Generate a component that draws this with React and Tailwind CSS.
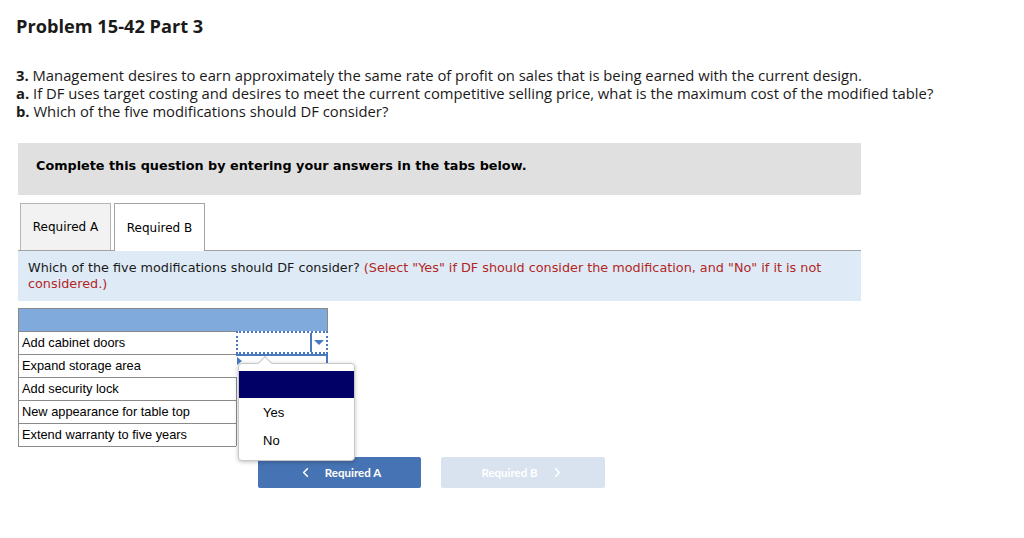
import { ChevronLeft, ChevronRight } from 'lucide-react';

const ROWS = [
    'Add cabinet doors',
    'Expand storage area',
    'Add security lock',
    'New appearance for table top',
    'Extend warranty to five years',
];

export default function App() {
    return (
        <div className="relative w-[1024px] h-[538px] bg-white text-[#1a1a1a] font-['Open_Sans',sans-serif]">
            <div className="pl-4 pt-4">
                <h1 className="text-[18.2px] leading-[20px] font-bold">Problem 15-42 Part 3</h1>

                {/* question text */}
                <div className="mt-[30px] text-[14.8px] leading-[18px]">
                    <p><b>3.</b> Management desires to earn approximately the same rate of profit on sales that is being earned with the current design.</p>
                    <p><b>a.</b> If DF uses target costing and desires to meet the current competitive selling price, what is the maximum cost of the modified table?</p>
                    <p><b>b.</b> Which of the five modifications should DF consider?</p>
                </div>

                <div className="ml-[2px] w-[843px] font-['DejaVu_Sans',Verdana,sans-serif]">
                    <div className="mt-[23px] h-[52px] bg-[#e0e0e0] pl-[18px] pt-[13px] text-[12.8px] font-bold text-black">
                        Complete this question by entering your answers in the tabs below.
                    </div>

                    {/* tabs */}
                    <div className="mt-[8px] flex items-end gap-[3px] pl-[2px] border-b border-[#a3a3a3] text-[12px] text-black">
                        <div className="w-[91px] h-[47px] flex items-center justify-center bg-[#f2f2f2] border border-b-0 border-[#b5b5b5]">Required A</div>
                        <div className="w-[91px] h-[48px] -mb-px flex items-center justify-center bg-white border border-b-0 border-[#a3a3a3]">Required B</div>
                    </div>

                    <div className="h-[50px] bg-[#deebf7] pl-[10px] pr-[10px] pt-[9px] text-[12.8px] leading-[16px] text-[#1a1a1a]">
                        Which of the five modifications should DF consider? <span className="text-[#b3261e]">(Select "Yes" if DF should consider the modification, and "No" if it is not considered.)</span>
                    </div>
                </div>

                {/* answer table */}
                <div className="ml-[2px] mt-[7px] w-[310px] font-['Liberation_Sans',Arial,sans-serif] text-[12.8px] text-black">
                    <div className="h-[23px] bg-[#80a9dc] border border-b-0 border-[#8a8a8a]"></div>
                    {ROWS.map((label, i) => (
                        <div key={label} className="flex h-[23px]">
                            <div className="w-[218px] flex items-center pl-[3px] border-l border-t border-[#8a8a8a]">
                                {label}
                            </div>
                            {i === 0 ? (
                                <div className="flex-1 flex border-2 border-dotted border-[#4a78c0]">
                                    <div className="flex-1"></div>
                                    <div className="w-[16px] border-l-2 border-[#4a78c0] flex items-center justify-center">
                                        <div className="w-0 h-0 border-l-[5px] border-r-[5px] border-t-[5px] border-l-transparent border-r-transparent border-t-[#4a78c0]"></div>
                                    </div>
                                </div>
                            ) : i === 1 ? (
                                <div className="flex-1 border-t-2 border-r-2 border-[#4a78c0] relative">
                                    <div className="absolute left-[1px] top-[1px] w-0 h-0 border-t-[4px] border-b-[4px] border-l-[5px] border-t-transparent border-b-transparent border-l-[#4a78c0]"></div>
                                </div>
                            ) : (
                                <div className="flex-1 border-l border-[#8a8a8a]"></div>
                            )}
                        </div>
                    ))}
                    <div className="w-[218px] border-t border-[#8a8a8a]"></div>
                </div>

                {/* nav buttons */}
                <div className="mt-[10px] flex gap-[20px] pl-[242px] text-[11.5px] font-bold font-['Lato',sans-serif]">
                    <div className="w-[163px] h-[31px] flex items-center justify-center gap-[12px] bg-[#4673b3] text-white rounded-[2px]">
                        <ChevronLeft size={15} strokeWidth={2.5} />
                        <span>Required A</span>
                    </div>
                    <div className="w-[164px] h-[31px] flex items-center justify-center gap-[12px] bg-[#d9e3f0] text-white rounded-[2px]">
                        <span>Required B</span>
                        <ChevronRight size={15} strokeWidth={2.5} />
                    </div>
                </div>
            </div>

            {/* open dropdown */}
            <div className="absolute left-[238px] top-[363px] w-[117px] h-[98px] bg-white border border-[#c8c8c8] rounded-[4px] shadow-[0_1px_4px_rgba(0,0,0,0.25)] font-['Liberation_Sans',Arial,sans-serif] text-[13px] text-black">
                <div className="absolute left-[21px] -top-[6px] w-[10px] h-[10px] bg-white border-l border-t border-[#c8c8c8] rotate-45"></div>
                <div className="relative mt-[7px] h-[27px] bg-[#000066]"></div>
                <div className="pl-[24px] pt-[1px] leading-[28px]">
                    <div>Yes</div>
                    <div>No</div>
                </div>
            </div>
        </div>
    );
}
